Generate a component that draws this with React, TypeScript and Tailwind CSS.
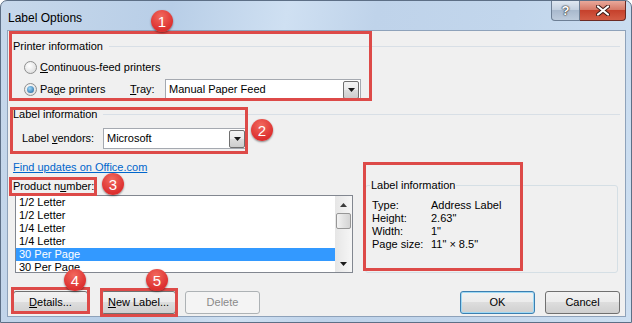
import React from "react";

const listItems = [
  "1/2 Letter",
  "1/2 Letter",
  "1/4 Letter",
  "1/4 Letter",
  "30 Per Page",
  "30 Per Page",
];

const infoRows = [
  ["Type:", "Address Label"],
  ["Height:", "2.63\""],
  ["Width:", "1\""],
  ["Page size:", "11\" \u00d7 8.5\""],
];

const DownTriangle = () => (
  <svg width="7" height="4" viewBox="0 0 7 4">
    <path d="M0 0H7L3.5 4Z" fill="#1a1a1a" />
  </svg>
);

const Radio = ({ checked }: { checked?: boolean }) => (
  <div className="w-[13px] h-[13px] rounded-full border border-[#8e8f8f] bg-[radial-gradient(circle_at_40%_35%,#ffffff,#d6d6d6)] flex items-center justify-center shrink-0">
    {checked && (
      <div className="w-[7px] h-[7px] rounded-full bg-[radial-gradient(circle_at_40%_35%,#9ad8fb,#1b5d96)]" />
    )}
  </div>
);

const Combo = ({ value, width }: { value: string; width: string }) => (
  <div className={`${width} h-[21px] bg-white border border-[#a5a9b0] flex items-center`}>
    <span className="flex-1 pl-[3px] leading-[13px]">{value}</span>
    <div className="w-[16px] h-[18px] mr-[1px] border border-[#707070] rounded-[2px] bg-[linear-gradient(#f4f4f4,#ebebeb_50%,#dddddd_50%,#cdcdcd)] flex items-center justify-center">
      <DownTriangle />
    </div>
  </div>
);

const Header = ({ text }: { text: string }) => (
  <div className="h-[14px] flex items-center ml-[5px] mr-[5px]">
    <span className="leading-[13px]">{text}</span>
    <div className="flex-1 h-px bg-[#d8dfe6] ml-[6px]" />
  </div>
);

const Btn = ({
  children,
  variant,
}: {
  children: React.ReactNode;
  variant?: "default" | "disabled";
}) => {
  let cls =
    "border-[#707070] bg-[linear-gradient(#f2f2f2,#ebebeb_50%,#dddddd_50%,#cfcfcf)] text-black";
  if (variant === "default")
    cls =
      "border-[#3c7fb1] bg-[linear-gradient(#f2f2f2,#ebebeb_50%,#dddddd_50%,#cfcfcf)] text-black shadow-[inset_0_0_0_1px_#9fd9f4]";
  if (variant === "disabled")
    cls = "border-[#adb2b5] bg-[#f4f4f4] text-[#8a8a8a]";
  return (
    <button
      className={`w-[75px] h-[23px] rounded-[3px] border ${cls} text-[11px] leading-[13px] flex items-center justify-center`}
    >
      {children}
    </button>
  );
};

const Badge = ({ n, left, top }: { n: number; left: string; top: string }) => (
  <div
    className={`absolute ${left} ${top} w-[22px] h-[22px] rounded-full bg-[radial-gradient(circle_at_45%_30%,#f26a5e,#dc2f2f_70%)] shadow-[0_1px_2px_rgba(0,0,0,0.45)] flex items-center justify-center text-white text-[15px] leading-none`}
  >
    {n}
  </div>
);

export default function App() {
  return (
    <div className="relative w-[632px] h-[323px] overflow-hidden bg-white font-['Liberation_Sans',Arial,sans-serif] text-[11px] text-black">
      <div className="w-[632px] h-[323px] rounded-t-[7px] border border-[#5d6f86] bg-[linear-gradient(100deg,#c7d8eb_0%,#b8cee7_25%,#cfe0f2_42%,#bfd3ea_55%,#c2d6ec_75%,#cddff1_100%)] flex flex-col">
        {/* title bar */}
        <div className="h-[29px] flex items-start justify-between">
          <div className="pl-[7px] pt-[10px] text-[12px] leading-[14px]">
            Label Options
          </div>
          <div className="flex mr-[5px]">
            <div className="w-[29px] h-[20px] rounded-bl-[4px] border border-[#6d7f95] border-t-0 bg-[linear-gradient(#dfe7f1,#c4d1e0_45%,#a9b9cd_50%,#bdcbdc)] flex items-center justify-center text-white font-bold text-[13px] [text-shadow:0_0_1px_#333,0_0_1px_#333,0_0_2px_#333]">
              ?
            </div>
            <div className="w-[46px] h-[20px] rounded-br-[4px] border border-[#6b2a24] border-t-0 border-l-0 bg-[linear-gradient(#e9a99b,#d67a68_45%,#c6412c_50%,#d35c45)] flex items-center justify-center">
              <svg width="14" height="11" viewBox="0 0 14 11">
                <path
                  d="M2 1.5L12 9.5M12 1.5L2 9.5"
                  stroke="#3b1a16"
                  strokeWidth="4"
                  strokeLinecap="round"
                />
                <path
                  d="M2 1.5L12 9.5M12 1.5L2 9.5"
                  stroke="#ffffff"
                  strokeWidth="2.2"
                  strokeLinecap="round"
                />
              </svg>
            </div>
          </div>
        </div>

        {/* client area */}
        <div className="ml-[6px] w-[619px] h-[287px] bg-[#f0f0f0] border border-[#8ea2ba] flex flex-col">
          <div className="mt-[8px]">
            <Header text="Printer information" />
          </div>
          <div className="mt-[6px] h-[16px] flex items-center ml-[16px] gap-[3px]">
            <Radio />
            <span className="leading-[13px]">
              <u>C</u>ontinuous-feed printers
            </span>
          </div>
          <div className="mt-[4px] h-[21px] flex items-center ml-[16px]">
            <Radio checked />
            <span className="w-[93px] pl-[3px] leading-[13px]">
              Pa<u>g</u>e printers
            </span>
            <span className="w-[35px] leading-[13px]">
              <u>T</u>ray:
            </span>
            <Combo value="Manual Paper Feed" width="w-[196px]" />
          </div>

          <div className="mt-[7px]">
            <Header text="Label information" />
          </div>
          <div className="mt-[7px] h-[21px] flex items-center ml-[14px]">
            <span className="w-[81px] leading-[13px]">
              Label <u>v</u>endors:
            </span>
            <Combo value="Microsoft" width="w-[144px]" />
          </div>

          <div className="flex items-end">
            <div className="w-[345px] flex flex-col">
              <div className="mt-[11px] h-[14px] ml-[5px] flex items-center">
                <span className="text-[#0066cc] underline leading-[13px]">
                  Find updates on Office.com
                </span>
              </div>
              <div className="mt-[5px] h-[14px] ml-[5px] flex items-center">
                <span className="leading-[13px]">
                  Product n<u>u</u>mber:
                </span>
              </div>
              <div className="mt-[2px] ml-[7px] w-[338px] h-[78px] bg-white border border-[#828790] flex">
                <div className="flex-1 flex flex-col overflow-hidden">
                  {listItems.map((item, i) => (
                    <div
                      key={i}
                      className={`h-[13px] shrink-0 pl-[3px] leading-[13px] ${
                        i === 4 ? "bg-[#3399ff] text-white" : ""
                      }`}
                    >
                      {item}
                    </div>
                  ))}
                </div>
                <div className="w-[17px] flex flex-col bg-[linear-gradient(90deg,#e6e6e6,#f6f6f6)]">
                  <div className="h-[17px] flex items-center justify-center">
                    <svg width="7" height="4" viewBox="0 0 7 4">
                      <path d="M0 4H7L3.5 0Z" fill="#3c3c3c" />
                    </svg>
                  </div>
                  <div className="h-[16px] mx-[1px] rounded-[2px] border border-[#979797] bg-[linear-gradient(90deg,#f3f3f3,#e2e2e2_50%,#d4d4d4)]" />
                  <div className="flex-1" />
                  <div className="h-[17px] flex items-center justify-center">
                    <DownTriangle />
                  </div>
                </div>
              </div>
            </div>

            <div className="relative ml-[12px] w-[253px] h-[88px] rounded-[3px] border border-[#d5dfe5] pl-[6px] pt-[13px]">
              <span className="absolute left-[4px] -top-[7px] px-[1px] bg-[#f0f0f0] leading-[13px]">
                Label information
              </span>
              {infoRows.map(([k, v]) => (
                <div key={k} className="h-[13px] flex leading-[13px]">
                  <span className="w-[59px]">{k}</span>
                  <span>{v}</span>
                </div>
              ))}
            </div>
          </div>

          <div className="mt-[18px] flex items-center pl-[5px] pr-[5px]">
            <Btn>
              <span>
                <u>D</u>etails...
              </span>
            </Btn>
            <div className="ml-[13px]">
              <Btn>
                <span>
                  <u>N</u>ew Label...
                </span>
              </Btn>
            </div>
            <div className="ml-[9px]">
              <Btn variant="disabled">Delete</Btn>
            </div>
            <div className="flex-1" />
            <Btn variant="default">OK</Btn>
            <div className="ml-[10px]">
              <Btn>Cancel</Btn>
            </div>
          </div>
        </div>
      </div>

      {/* annotation boxes */}
      <div className="absolute left-[9px] top-[31px] w-[363px] h-[70px] border-[3px] border-[#dd4a48]" />
      <div className="absolute left-[10px] top-[107px] w-[238px] h-[47px] border-[3px] border-[#dd4a48]" />
      <div className="absolute left-[9px] top-[177px] w-[88px] h-[19px] border-[3px] border-[#dd4a48]" />
      <div className="absolute left-[363px] top-[162px] w-[160px] h-[109px] border-[3px] border-[#dd4a48]" />
      <div className="absolute left-[11px] top-[287px] w-[79px] h-[27px] border-[3px] border-[#dd4a48]" />
      <div className="absolute left-[100px] top-[288px] w-[78px] h-[29px] border-[3px] border-[#dd4a48]" />

      <Badge n={1} left="left-[151px]" top="top-[10px]" />
      <Badge n={2} left="left-[251px]" top="top-[119px]" />
      <Badge n={3} left="left-[102px]" top="top-[173px]" />
      <Badge n={4} left="left-[64px]" top="top-[269px]" />
      <Badge n={5} left="left-[146px]" top="top-[269px]" />
    </div>
  );
}
